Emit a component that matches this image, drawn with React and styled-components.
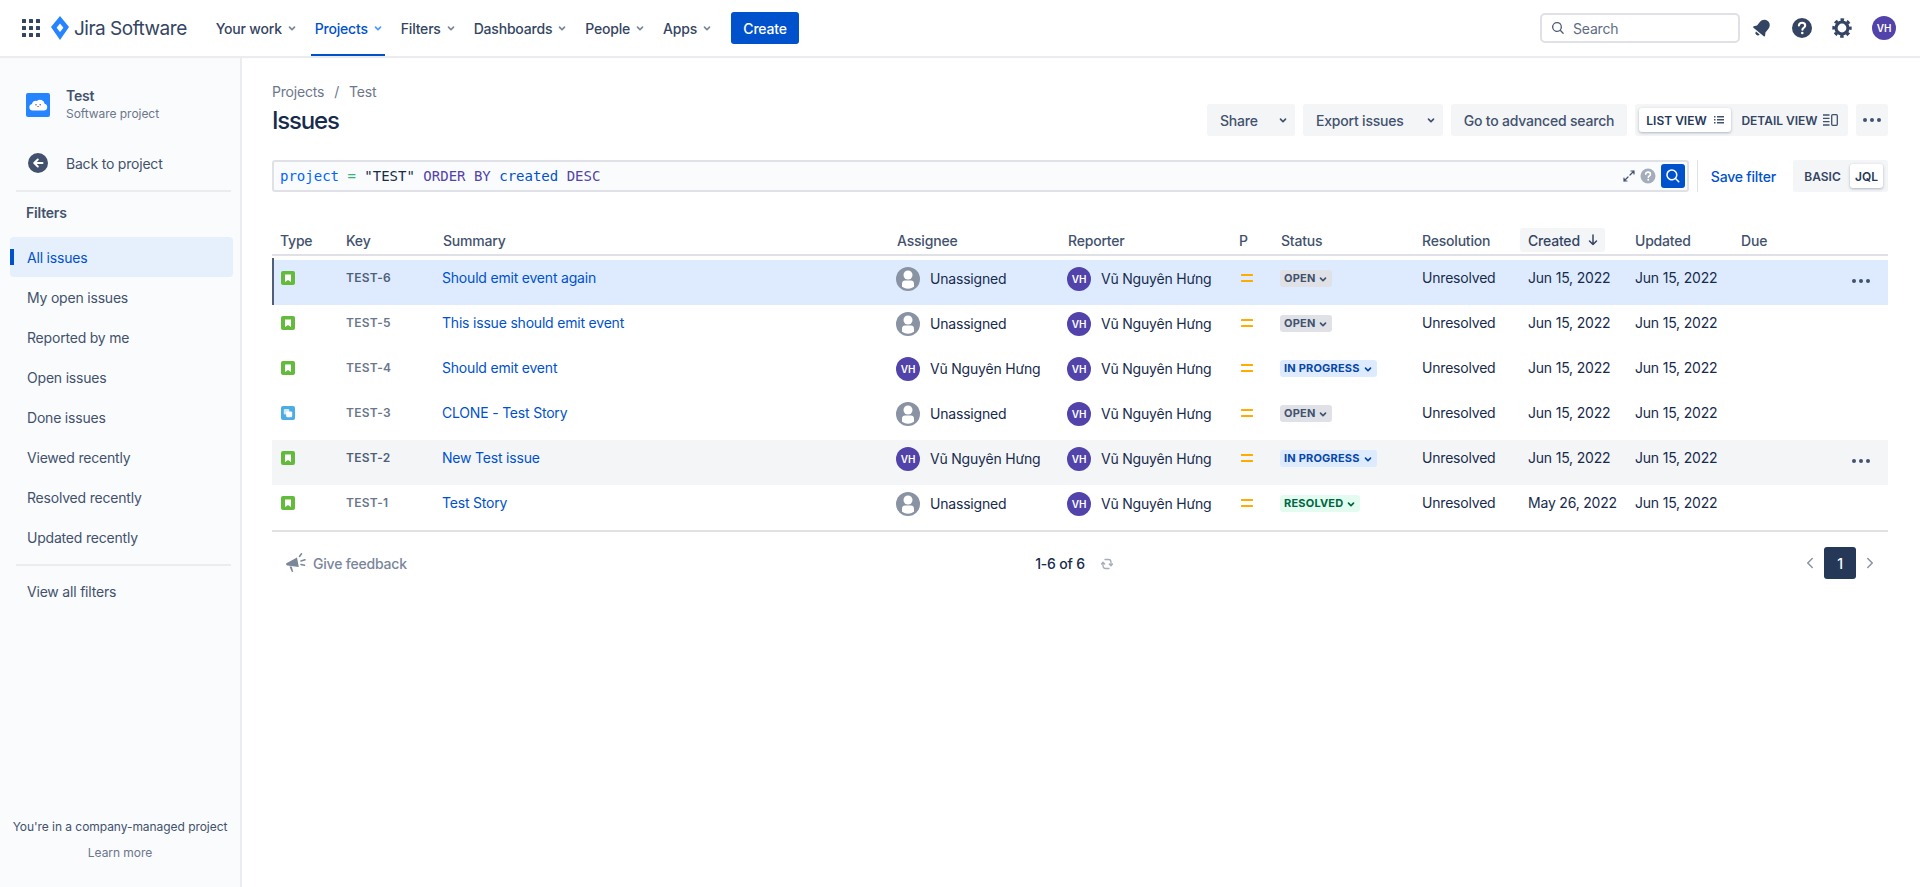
import React from 'react';
import styled, { createGlobalStyle } from 'styled-components';
import { ChevronLeft, ChevronRight } from 'lucide-react';

const GlobalStyle = createGlobalStyle`
  html, body { margin: 0; padding: 0; background: #fff; }
  body { font-family: Inter, "Noto Sans", sans-serif; font-size: 14px; letter-spacing: -0.2px; color: #172b4d; }
  * { box-sizing: border-box; }
`;

const COLUMNS = '66px 97px 454px 171px 171px 42px 141px 106px 107px 106px 1fr 36px';

/* ---------- icons ---------- */
const Chevron = ({ size = 20, color = 'currentColor' }) => (
  <svg width={size} height={size} viewBox="0 0 24 24" fill={color}>
    <path d="M8.292 10.293a1.009 1.009 0 000 1.419l2.939 2.965c.218.215.5.322.779.322s.556-.107.769-.322l2.93-2.955a1.01 1.01 0 000-1.419.987.987 0 00-1.406 0l-2.298 2.317-2.307-2.327a.99.99 0 00-1.406 0z" />
  </svg>
);

const SearchIcon = ({ size = 16, color = '#505f79' }) => (
  <svg width={size} height={size} viewBox="0 0 24 24" fill={color}>
    <path fillRule="evenodd" d="M16.436 15.085l3.94 4.01a1 1 0 01-1.425 1.402l-3.938-4.006a7.5 7.5 0 111.423-1.406zM10.5 16a5.5 5.5 0 100-11 5.5 5.5 0 000 11z" />
  </svg>
);

const AppGrid = () => (
  <svg width="18" height="18" viewBox="0 0 18 18" fill="#344563">
    {[0, 7, 14].map((y) => [0, 7, 14].map((x) => <rect key={`${x}-${y}`} x={x} y={y} width="4" height="4" rx="0.5" />))}
  </svg>
);

const JiraMark = () => (
  <svg width="18" height="24" viewBox="0 0 18 24">
    <path d="M9 0 L18 11 L9 24 L0 11 Z" fill="#2684ff" />
    <path d="M9 7.5 L12.4 11.8 L9 16 L5.6 11.8 Z" fill="#fff" />
  </svg>
);

const Bell = () => (
  <svg width="24" height="24" viewBox="0 0 24 24" fill="#344563">
    <g transform="rotate(40 12 12)">
      <path d="M12 3c-3.3 0-5.5 2.6-5.5 5.8v4.4L4.6 16c-.4.6 0 1.3.7 1.3h13.4c.7 0 1.1-.7.7-1.3l-1.9-2.8V8.800C17.500 5.600 15.300 3 12 3z" />
      <path d="M9.600 18.500h4.800a2.400 2.400 0 01-4.800 0z" />
    </g>
  </svg>
);

const HelpIcon = ({ size = 24, bg = '#344563' }) => (
  <svg width={size} height={size} viewBox="0 0 24 24">
    <circle cx="12" cy="12" r="10" fill={bg} />
    <path d="M8.900 9.500c.2-1.700 1.500-2.700 3.200-2.700 1.800 0 3.100 1.100 3.100 2.700 0 1.300-.7 1.900-1.600 2.500-.8.500-1.200.9-1.200 1.800" fill="none" stroke="#fff" strokeWidth="2.100" strokeLinecap="round" />
    <circle cx="12.300" cy="17" r="1.300" fill="#fff" />
  </svg>
);

const Gear = () => (
  <svg width="24" height="24" viewBox="0 0 24 24" fill="none" stroke="#344563">
    <circle cx="12" cy="12" r="6" strokeWidth="3.200" />
    <circle cx="12" cy="12" r="8.300" strokeWidth="2.800" strokeDasharray="3.500 3.020" strokeDashoffset="1.750" />
  </svg>
);

const ProjectLogo = () => (
  <svg width="24" height="24" viewBox="0 0 24 24">
    <rect width="24" height="24" rx="2" fill="#2684ff" />
    <path d="M6.500 17.500a3.300 3.300 0 01-.6-6.500 3.900 3.900 0 015-3.100 4.600 4.600 0 017.700 2.900 3.400 3.400 0 01-.6 6.700z" fill="#fff" />
    <circle cx="10" cy="11.800" r=".7" fill="#42526e" />
    <circle cx="14.200" cy="11.800" r=".7" fill="#42526e" />
    <path d="M11 13h2.200a1.100 1.100 0 01-2.200 0z" fill="#ff5630" />
  </svg>
);

const BackIcon = () => (
  <svg width="20" height="20" viewBox="0 0 20 20">
    <circle cx="10" cy="10" r="10" fill="#42526e" />
    <path d="M14.500 10h-8M9.800 6.500 6.200 10l3.600 3.500" fill="none" stroke="#fff" strokeWidth="2" strokeLinecap="round" strokeLinejoin="round" />
  </svg>
);

const StoryIcon = () => (
  <svg width="14" height="14" viewBox="0 0 14 14">
    <rect width="14" height="14" rx="2" fill="#63ba3c" />
    <path d="M4 3.500h6v7.500L7 9l-3 2z" fill="#fff" />
  </svg>
);

const CloneIcon = () => (
  <svg width="14" height="14" viewBox="0 0 14 14">
    <rect width="14" height="14" rx="2" fill="#4bade8" />
    <rect x="2.800" y="3" width="5.500" height="5.500" rx="1.200" fill="#fff" opacity=".75" />
    <rect x="5.200" y="5.400" width="6" height="5.800" rx="1.200" fill="#fff" />
  </svg>
);

const PersonAvatar = () => (
  <svg width="24" height="24" viewBox="0 0 24 24">
    <circle cx="12" cy="12" r="12" fill="#8993a4" />
    <circle cx="12" cy="8" r="4.500" fill="#fff" />
    <path d="M6 16.500c0-1.700 1.300-3 3-3h6c1.700 0 3 1.300 3 3v3.300a11 11 0 01-12 0z" fill="#fff" />
  </svg>
);

const MediumPriority = () => (
  <svg width="12" height="8" viewBox="0 0 12 8" fill="#ffab00">
    <rect width="12" height="2" rx=".5" />
    <rect y="6" width="12" height="2" rx=".5" />
  </svg>
);

const ListIcon = () => (
  <svg width="10" height="10" viewBox="0 0 10 10" fill="#42526e">
    {[1, 4, 7].map((y) => (
      <g key={y}>
        <rect x="0" y={y} width="1.500" height="1.500" />
        <rect x="3" y={y} width="7" height="1.500" />
      </g>
    ))}
  </svg>
);

const DetailIcon = () => (
  <svg width="15" height="12" viewBox="0 0 15 12" fill="none" stroke="#42526e" strokeWidth="1.300">
    <path d="M0 1h6.500M0 4.300h6.500M0 7.600h6.500M0 11h6.500" />
    <rect x="8.700" y=".7" width="5.600" height="10.600" rx="1" />
  </svg>
);

const ExpandIcon = () => (
  <svg width="12" height="12" viewBox="0 0 12 12" fill="none" stroke="#42526e" strokeWidth="1.200" strokeLinecap="round">
    <path d="M7 5 11 1M8 1h3v3M5 7 1 11M1 8v3h3" />
  </svg>
);

const Megaphone = () => (
  <svg width="20" height="20" viewBox="0 0 20 20" fill="#7a869a">
    <path d="M0 10.500 11 4.500l1.800 9.500-5.800-.8-5.700-.6c-.9-.3-1.300-1.300-1.300-2.100z" />
    <path d="M3.500 13.500h2.200l1.500 5.200-1.300.4z" />
    <path d="M13.500 3.500 15.500.8M15 8l4-1.200M15 11.500l3.500.8" stroke="#7a869a" strokeWidth="1.500" strokeLinecap="round" fill="none" />
  </svg>
);

const RefreshIcon = () => (
  <svg width="12" height="14" viewBox="0 0 12 14" fill="none" stroke="#a5adba" strokeWidth="1.300" strokeLinecap="round" strokeLinejoin="round">
    <path d="M4 2.500h3.500c1.500 0 2.500 1.200 2.500 2.700v3.300M8.300 7 10 8.800 11.500 7" />
    <path d="M8 11.500H4.500C3 11.500 2 10.300 2 8.800V5.500M3.700 7 2 5.200.5 7" />
  </svg>
);

/* ---------- top nav ---------- */
const Page = styled.div`
  display: flex;
  flex-direction: column;
  height: 887px;
  overflow: hidden;
`;

const TopNav = styled.header`
  display: flex;
  align-items: center;
  height: 56px;
  flex: none;
  padding: 0 24px 0 22px;
  background: #fff;
  box-shadow: 0 2px 1px #ebecf0;
  position: relative;
  z-index: 2;
`;

const Logo = styled.div`
  display: flex;
  align-items: center;
  gap: 5px;
  margin-left: 11px;
  margin-right: 25px;
`;

const LogoText = styled.span`
  font-size: 19px;
  font-weight: 400;
  color: #344563;
  letter-spacing: -0.5px;
  white-space: nowrap;
`;

const NavItem = styled.div`
  display: flex;
  align-items: center;
  height: 56px;
  padding: 0 3px 0 4px;
  margin-right: 10px;
  font-weight: 500;
  white-space: nowrap;
  color: ${(p) => (p.$active ? '#0052cc' : '#344563')};
  position: relative;
  svg { color: ${(p) => (p.$active ? '#4c9aff' : '#7a869a')}; margin: 0 -4px 0 0; }
  ${(p) => p.$active && `
    &::after {
      content: '';
      position: absolute;
      left: 0;
      right: 2px;
      bottom: 0;
      height: 2px;
      background: #0052cc;
    }
  `}
`;

const CreateButton = styled.button`
  height: 32px;
  width: 68px;
  margin-left: 5px;
  border: 0;
  border-radius: 3px;
  background: #0052cc;
  color: #fff;
  font: 500 14px Inter, sans-serif;
  letter-spacing: -0.2px;
`;

const NavRight = styled.div`
  display: flex;
  align-items: center;
  margin-left: auto;
`;

const SearchBox = styled.div`
  display: flex;
  align-items: center;
  gap: 7px;
  width: 200px;
  height: 30px;
  padding: 0 8px;
  border: 2px solid #dfe1e6;
  border-radius: 5px;
  color: #5e6c84;
  margin-right: 10px;
`;

const NavIcon = styled.div`
  display: flex;
  width: 24px;
  justify-content: center;
  margin-right: ${(p) => p.$gap}px;
`;

const Avatar = styled.div`
  width: 24px;
  height: 24px;
  flex: none;
  display: flex;
  align-items: center;
  justify-content: center;
  border-radius: 50%;
  background: #5243aa;
  color: #fff;
  font-size: 10px;
  font-weight: 600;
  letter-spacing: 0;
`;

/* ---------- sidebar ---------- */
const Body = styled.div`
  display: flex;
  flex: 1;
  min-height: 0;
`;

const Sidebar = styled.aside`
  display: flex;
  flex-direction: column;
  width: 242px;
  flex: none;
  background: #fafbfc;
  border-right: 2px solid #ebecf0;
  padding-top: 37px;
`;

const ProjectRow = styled.div`
  display: flex;
  align-items: center;
  gap: 16px;
  height: 24px;
  padding-left: 26px;
`;

const ProjectName = styled.div`
  font-size: 14px;
  font-weight: 600;
  color: #42526e;
  line-height: 18px;
`;

const ProjectType = styled.div`
  font-size: 12px;
  color: #6b778c;
  line-height: 18px;
  letter-spacing: -0.05px;
`;

const BackRow = styled.div`
  display: flex;
  align-items: center;
  gap: 18px;
  padding-left: 28px;
  margin-top: 36px;
  height: 20px;
  color: #42526e;
`;

const SideDivider = styled.div`
  height: 2px;
  margin: ${(p) => p.$top}px 9px ${(p) => p.$bottom || 0}px 16px;
  background: #ebecf0;
  flex: none;
`;

const FiltersTitle = styled.div`
  margin: 11px 0 14px 26px;
  line-height: 20px;
  font-weight: 600;
  color: #42526e;
`;

const FilterItem = styled.div`
  display: flex;
  align-items: center;
  height: 40px;
  margin: 0 7px 0 10px;
  padding-left: 17px;
  border-radius: 4px;
  color: ${(p) => (p.$active ? '#0052cc' : '#42526e')};
  background: ${(p) => (p.$active ? '#e6effc' : 'transparent')};
  position: relative;
  ${(p) => p.$active && `
    &::before {
      content: '';
      position: absolute;
      left: 0;
      top: 12px;
      width: 4px;
      height: 16px;
      background: #0052cc;
    }
  `}
`;

const SideFooter = styled.div`
  margin-top: auto;
  padding-bottom: 26px;
  text-align: center;
  font-size: 12px;
  line-height: 16px;
  letter-spacing: -0.05px;
  color: #42526e;
`;

const LearnMore = styled.div`
  margin-top: 10px;
  color: #6b778c;
`;

/* ---------- main ---------- */
const Main = styled.main`
  flex: 1;
  min-width: 0;
  padding: 26px 32px 0 30px;
`;

const Breadcrumbs = styled.div`
  display: flex;
  gap: 10px;
  height: 20px;
  line-height: 20px;
  color: #6b778c;
  margin-bottom: 2px;
`;

const TitleRow = styled.div`
  display: flex;
  align-items: center;
  height: 32px;
`;

const Title = styled.h1`
  margin: 0;
  font-size: 24px;
  font-weight: 500;
  letter-spacing: -1.2px;
  color: #172b4d;
`;

const Actions = styled.div`
  display: flex;
  gap: 8px;
  margin-left: auto;
`;

const GrayButton = styled.div`
  display: flex;
  align-items: center;
  justify-content: ${(p) => (p.$between ? 'space-between' : 'center')};
  width: ${(p) => p.$w}px;
  height: 32px;
  padding: 0 ${(p) => (p.$between ? 2 : 0)}px 0 ${(p) => (p.$between ? 13 : 0)}px;
  border-radius: 3px;
  background: #f4f5f7;
  color: #42526e;
  font-weight: 500;
  white-space: nowrap;
`;

const Segmented = styled.div`
  display: flex;
  align-items: center;
  padding: 0 4px;
  height: 32px;
  border-radius: 3px;
  background: #f4f5f7;
`;

const BasicSwitch = styled(Segmented)`
  padding: 0 5px 0 2px;
`;

const SegmentButton = styled.div`
  display: flex;
  align-items: center;
  justify-content: center;
  gap: ${(p) => p.$iconGap || 0}px;
  width: ${(p) => p.$w}px;
  height: 24px;
  border-radius: 3px;
  font-size: 12px;
  font-weight: 600;
  letter-spacing: 0;
  color: ${(p) => (p.$on ? '#253858' : '#344563')};
  background: ${(p) => (p.$on ? '#fff' : 'transparent')};
  box-shadow: ${(p) => (p.$on ? '0 1px 3px rgba(9, 30, 66, 0.3)' : 'none')};
  white-space: nowrap;
`;

const DetailButton = styled(SegmentButton)`
  padding-left: 4px;
`;

const Dots = styled.div`
  display: flex;
  justify-content: center;
  gap: 3px;
  span {
    width: 4px;
    height: 4px;
    border-radius: 50%;
    background: #42526e;
  }
`;

const QueryRow = styled.div`
  display: flex;
  align-items: center;
  height: 32px;
  margin-top: 24px;
`;

const QueryBox = styled.div`
  display: flex;
  align-items: center;
  flex: 1;
  height: 32px;
  padding: 0 2px 0 6px;
  border: 2px solid #dfe1e6;
  border-radius: 3px;
  background: #fafbfc;
`;

const QueryText = styled.div`
  font: 14px "DejaVu Sans Mono", monospace;
  letter-spacing: 0;
  white-space: pre;
`;

const Tok = styled.span`
  color: ${(p) => p.$c};
`;

const QueryTools = styled.div`
  display: flex;
  align-items: center;
  gap: 4px;
  margin-left: auto;
`;

const QuerySearch = styled.div`
  display: flex;
  align-items: center;
  justify-content: center;
  width: 24px;
  height: 24px;
  border-radius: 3px;
  background: #0052cc;
`;

const VRule = styled.div`
  width: 1px;
  height: 32px;
  margin: 0 13px 0 8px;
  background: #dfe1e6;
`;

const SaveFilter = styled.div`
  color: #0052cc;
  font-weight: 500;
  margin-right: 17px;
  white-space: nowrap;
`;

/* ---------- table ---------- */
const TableHead = styled.div`
  display: grid;
  grid-template-columns: ${COLUMNS};
  align-items: center;
  height: 28px;
  margin-top: 36px;
  margin-bottom: 4px;
  border-bottom: 2px solid #dfe1e6;
  font-weight: 500;
  color: #42526e;
`;

const HeadCell = styled.div`
  display: flex;
  align-items: center;
  gap: ${(p) => (p.$sorted ? 8 : 4)}px;
  height: 24px;
  margin-top: -2px;
  padding-left: 8px;
  ${(p) => p.$sorted && `
    width: 85px;
    background: #f4f5f7;
    border-radius: 3px;
    color: #344563;
  `}
`;

const Row = styled.div`
  display: grid;
  grid-template-columns: ${COLUMNS};
  height: 45px;
  background: ${(p) => p.$bg || 'transparent'};
  position: relative;
  ${(p) => p.$marked && `
    &::before {
      content: '';
      position: absolute;
      left: 0;
      top: -2px;
      bottom: 0;
      width: 2px;
      background: #505f79;
    }
  `}
`;

const Cell = styled.div`
  display: flex;
  align-items: flex-start;
  gap: 10px;
  padding: ${(p) => p.$top ?? 8}px 0 0 ${(p) => p.$left ?? 8}px;
  line-height: 20px;
  white-space: nowrap;
`;

const KeyText = styled.span`
  font-size: 12px;
  font-weight: 600;
  letter-spacing: 0.25px;
  color: ${(p) => (p.$strong ? '#505f79' : '#6b778c')};
`;

const Link = styled.span`
  color: #0052cc;
`;

const Lozenge = styled.span`
  display: inline-flex;
  align-items: center;
  height: 17px;
  padding: 0 0 0 4px;
  border-radius: 3px;
  font-size: 11px;
  font-weight: 700;
  letter-spacing: 0.2px;
  line-height: 17px;
  background: ${(p) => p.$bg};
  color: ${(p) => p.$fg};
  svg { margin-left: -2px; margin-right: -1px; }
`;

const TableEnd = styled.div`
  height: 2px;
  background: #dfe1e6;
`;

const Footer = styled.div`
  display: grid;
  grid-template-columns: 1fr auto 1fr;
  align-items: center;
  height: 32px;
  margin-top: 15px;
`;

const Feedback = styled.div`
  display: flex;
  align-items: center;
  gap: 7px;
  padding-left: 14px;
  font-weight: 500;
  color: #7a869a;
`;

const Count = styled.div`
  display: flex;
  align-items: center;
  gap: 16px;
  font-weight: 500;
  margin-right: 12px;
  svg { margin-top: 2px; }
`;

const Pager = styled.div`
  display: flex;
  align-items: center;
  justify-content: flex-end;
  gap: 5px;
  color: #8993a4;
  margin-right: 9px;
`;

const PageNum = styled.div`
  display: flex;
  align-items: center;
  justify-content: center;
  width: 32px;
  height: 32px;
  border-radius: 3px;
  background: #253858;
  color: #fff;
  font-weight: 500;
`;

/* ---------- data ---------- */
const FILTERS = ['All issues', 'My open issues', 'Reported by me', 'Open issues', 'Done issues', 'Viewed recently', 'Resolved recently', 'Updated recently'];

const HEADERS = ['Type', 'Key', 'Summary', 'Assignee', 'Reporter', 'P', 'Status', 'Resolution', 'Created', 'Updated', 'Due'];

const STATUS = {
  open: { label: 'OPEN', bg: '#dfe1e6', fg: '#42526e' },
  progress: { label: 'IN PROGRESS', bg: '#deebff', fg: '#0747a6' },
  resolved: { label: 'RESOLVED', bg: '#e3fcef', fg: '#006644' },
};

const NAME = 'Vũ Nguyên Hưng';

const ISSUES = [
  { id: 'TEST-6', title: 'Should emit event again', status: 'open', created: 'Jun 15, 2022', bg: '#deebff', marked: true, menu: true, strong: true },
  { id: 'TEST-5', title: 'This issue should emit event', status: 'open', created: 'Jun 15, 2022' },
  { id: 'TEST-4', title: 'Should emit event', status: 'progress', created: 'Jun 15, 2022', assigned: true },
  { id: 'TEST-3', title: 'CLONE - Test Story', status: 'open', created: 'Jun 15, 2022', clone: true },
  { id: 'TEST-2', title: 'New Test issue', status: 'progress', created: 'Jun 15, 2022', assigned: true, bg: '#f4f5f7', menu: true, strong: true },
  { id: 'TEST-1', title: 'Test Story', status: 'resolved', created: 'May 26, 2022' },
];

const NAV = [
  { label: 'Your work' },
  { label: 'Projects', active: true },
  { label: 'Filters' },
  { label: 'Dashboards' },
  { label: 'People' },
  { label: 'Apps' },
];

const IssueRow = ({ issue }) => {
  const status = STATUS[issue.status];
  return (
    <Row $bg={issue.bg} $marked={issue.marked}>
      <Cell $top={11} $left={9}>{issue.clone ? <CloneIcon /> : <StoryIcon />}</Cell>
      <Cell><KeyText $strong={issue.strong}>{issue.id}</KeyText></Cell>
      <Cell $left={7}><Link>{issue.title}</Link></Cell>
      <Cell $top={7} $left={7}>
        {issue.assigned ? <Avatar>VH</Avatar> : <PersonAvatar />}
        <Cell $left={0} $top={2} as="span">{issue.assigned ? NAME : 'Unassigned'}</Cell>
      </Cell>
      <Cell $top={7} $left={7}>
        <Avatar>VH</Avatar>
        <Cell $left={0} $top={2} as="span">{NAME}</Cell>
      </Cell>
      <Cell $top={14} $left={10}><MediumPriority /></Cell>
      <Cell $top={10} $left={7}>
        <Lozenge $bg={status.bg} $fg={status.fg}>{status.label}<Chevron size={20} /></Lozenge>
      </Cell>
      <Cell>Unresolved</Cell>
      <Cell>{issue.created}</Cell>
      <Cell>Jun 15, 2022</Cell>
      <Cell />
      <Cell $top={19} $left={0}>
        {issue.menu && <Dots><span /><span /><span /></Dots>}
      </Cell>
    </Row>
  );
};

const App = () => (
  <Page>
    <GlobalStyle />
    <TopNav>
      <AppGrid />
      <Logo>
        <JiraMark />
        <LogoText>Jira Software</LogoText>
      </Logo>
      {NAV.map((item) => (
        <NavItem key={item.label} $active={item.active}>
          {item.label}
          <Chevron />
        </NavItem>
      ))}
      <CreateButton>Create</CreateButton>
      <NavRight>
        <SearchBox>
          <SearchIcon />
          Search
        </SearchBox>
        <NavIcon $gap={16}><Bell /></NavIcon>
        <NavIcon $gap={16}><HelpIcon /></NavIcon>
        <NavIcon $gap={18}><Gear /></NavIcon>
        <Avatar>VH</Avatar>
      </NavRight>
    </TopNav>
    <Body>
      <Sidebar>
        <ProjectRow>
          <ProjectLogo />
          <div>
            <ProjectName>Test</ProjectName>
            <ProjectType>Software project</ProjectType>
          </div>
        </ProjectRow>
        <BackRow>
          <BackIcon />
          Back to project
        </BackRow>
        <SideDivider $top={17} />
        <FiltersTitle>Filters</FiltersTitle>
        {FILTERS.map((name, i) => (
          <FilterItem key={name} $active={i === 0}>{name}</FilterItem>
        ))}
        <SideDivider $top={7} $bottom={5} />
        <FilterItem>View all filters</FilterItem>
        <SideFooter>
          You're in a company-managed project
          <LearnMore>Learn more</LearnMore>
        </SideFooter>
      </Sidebar>
      <Main>
        <Breadcrumbs>
          <span>Projects</span>
          <span>/</span>
          <span>Test</span>
        </Breadcrumbs>
        <TitleRow>
          <Title>Issues</Title>
          <Actions>
            <GrayButton $w={88} $between>Share <Chevron /></GrayButton>
            <GrayButton $w={140} $between>Export issues <Chevron /></GrayButton>
            <GrayButton $w={176}>Go to advanced search</GrayButton>
            <Segmented>
              <SegmentButton $on $w={92} $iconGap={7}>LIST VIEW <ListIcon /></SegmentButton>
              <DetailButton $w={113} $iconGap={5}>DETAIL VIEW <DetailIcon /></DetailButton>
            </Segmented>
            <GrayButton $w={32}><Dots><span /><span /><span /></Dots></GrayButton>
          </Actions>
        </TitleRow>
        <QueryRow>
          <QueryBox>
            <QueryText>
              <Tok $c="#0065ff">project</Tok> <Tok $c="#36b37e">=</Tok> <Tok $c="#172b4d">"TEST"</Tok> <Tok $c="#5243aa">ORDER BY</Tok> <Tok $c="#0052cc">created</Tok> <Tok $c="#5243aa">DESC</Tok>
            </QueryText>
            <QueryTools>
              <ExpandIcon />
              <HelpIcon size={18} bg="#a5adba" />
              <QuerySearch><SearchIcon size={18} color="#fff" /></QuerySearch>
            </QueryTools>
          </QueryBox>
          <VRule />
          <SaveFilter>Save filter</SaveFilter>
          <BasicSwitch>
            <SegmentButton $w={55}>BASIC</SegmentButton>
            <SegmentButton $on $w={33}>JQL</SegmentButton>
          </BasicSwitch>
        </QueryRow>
        <TableHead>
          {HEADERS.map((h) => (
            <HeadCell key={h} $sorted={h === 'Created'}>
              {h}
              {h === 'Created' && (
                <svg width="10" height="12" viewBox="0 0 10 12" fill="none" stroke="#344563" strokeWidth="1.500" strokeLinecap="round" strokeLinejoin="round">
                  <path d="M5 1v9.500M1.500 7 5 10.500 8.500 7" />
                </svg>
              )}
            </HeadCell>
          ))}
        </TableHead>
        {ISSUES.map((issue) => <IssueRow key={issue.id} issue={issue} />)}
        <TableEnd />
        <Footer>
          <Feedback><Megaphone /> Give feedback</Feedback>
          <Count>
            1-6 of 6
            <RefreshIcon />
          </Count>
          <Pager>
            <ChevronLeft size={18} strokeWidth={2} />
            <PageNum>1</PageNum>
            <ChevronRight size={18} strokeWidth={2} />
          </Pager>
        </Footer>
      </Main>
    </Body>
  </Page>
);

export default App;
